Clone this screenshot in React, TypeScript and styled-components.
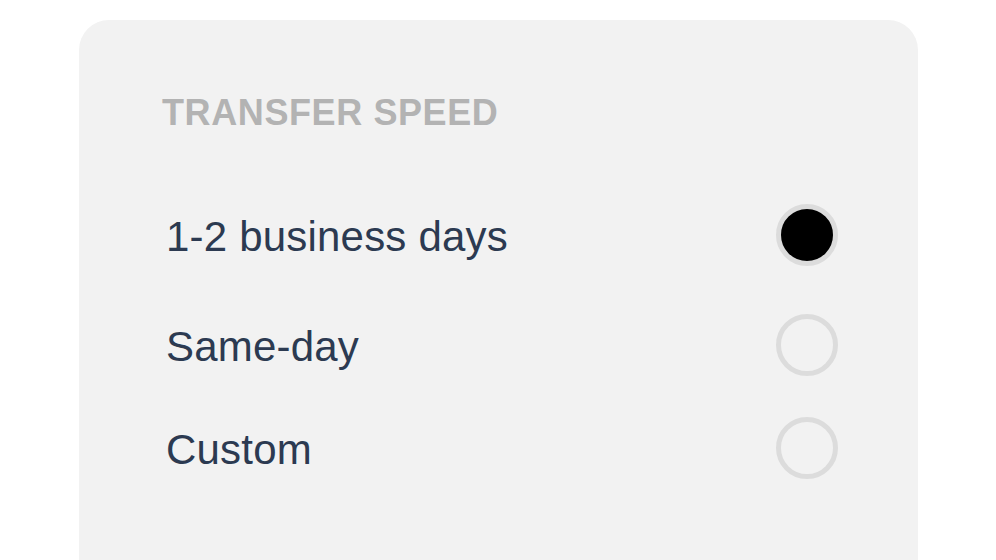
import React, { useState } from "react";
import styled, { createGlobalStyle } from "styled-components";

const Global = createGlobalStyle`
  html, body { margin: 0; padding: 0; background: #ffffff; }
  body { font-family: "Liberation Sans", Arial, sans-serif; }
`;

const Page = styled.div`
  height: 560px;
  overflow: hidden;
  padding: 20px 0 0 79px;
  box-sizing: border-box;
`;

const Card = styled.section`
  width: 839px;
  min-height: 600px;
  box-sizing: border-box;
  background: #f2f2f2;
  border-radius: 30px;
  padding: 75px 80px 0 83px;
  display: flex;
  flex-direction: column;
`;

const Title = styled.h2`
  margin: 0 0 73px 0;
  font-size: 36px;
  line-height: 36px;
  font-weight: 700;
  color: #b3b3b3;
  letter-spacing: 0.6px;
`;

const List = styled.div`
  display: flex;
  flex-direction: column;
`;

const Row = styled.label<{ $gap: number }>`
  display: flex;
  align-items: center;
  justify-content: space-between;
  height: 62px;
  margin-bottom: ${(p) => p.$gap}px;
  cursor: pointer;
  padding-left: 4px;
`;

const Label = styled.span`
  font-size: 42px;
  line-height: 62px;
  padding-top: 4px;
  color: #2c3a51;
  letter-spacing: 0.2px;
`;

const Radio = styled.span<{ $checked: boolean }>`
  width: 62px;
  height: 62px;
  box-sizing: border-box;
  border-radius: 50%;
  border: 5px solid #dcdcdc;
  background: ${(p) => (p.$checked ? "#000000" : "transparent")};
`;

const options = [
  { label: "1-2 business days", gap: 48 },
  { label: "Same-day", gap: 41 },
  { label: "Custom", gap: 0 },
];

export default function App() {
  const [selected, setSelected] = useState(0);
  return (
    <>
      <Global />
      <Page>
        <Card>
          <Title>TRANSFER SPEED</Title>
          <List>
            {options.map((o, i) => (
              <Row key={o.label} $gap={o.gap} onClick={() => setSelected(i)}>
                <Label>{o.label}</Label>
                <Radio $checked={selected === i} />
              </Row>
            ))}
          </List>
        </Card>
      </Page>
    </>
  );
}
